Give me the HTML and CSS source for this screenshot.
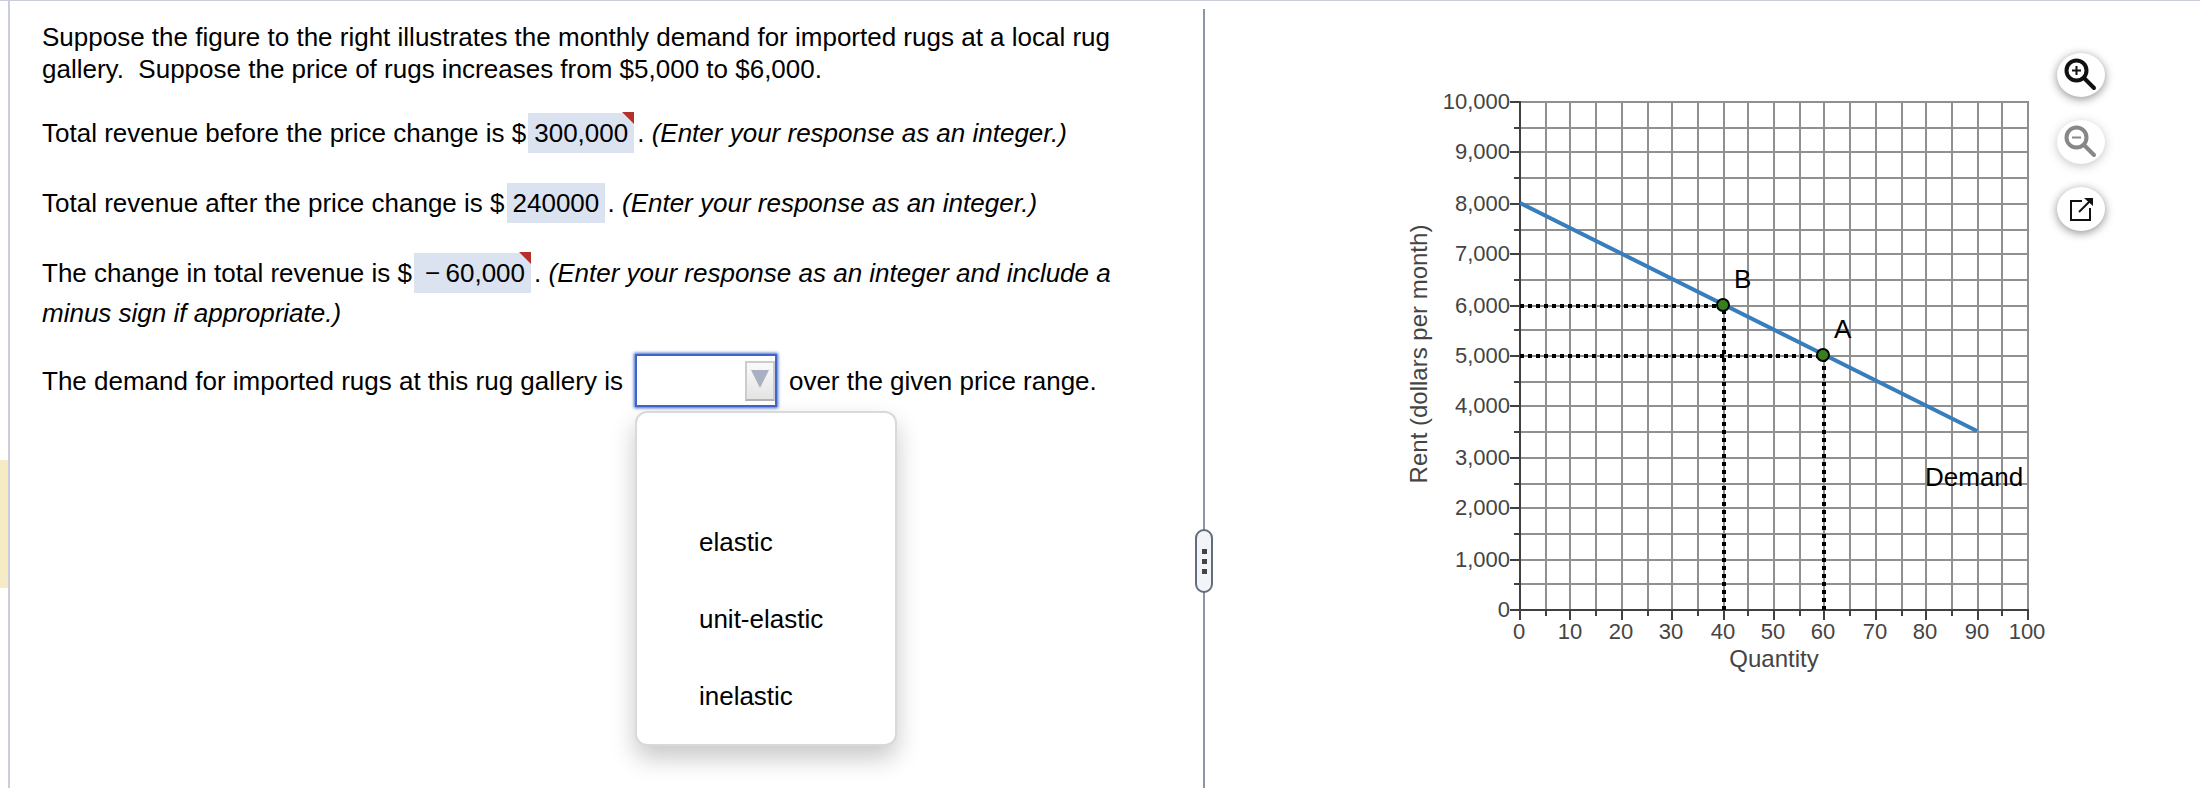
FILE: index.html
```html
<!DOCTYPE html>
<html lang="en">
<head>
    <meta charset="UTF-8">
    <meta name="viewport" content="width=device-width, initial-scale=1.0">
    <title>Demand for imported rugs</title>
    <link rel="stylesheet" href="styles.css">
</head>
<body>

    <div class="page">
        <aside class="gutter">
            <div class="marker"></div>
        </aside>

        <main class="question">
            <p class="intro">Suppose the figure to the right illustrates the monthly demand for imported rugs at a local rug gallery.&nbsp; Suppose the price of rugs increases from $5,000 to $6,000.</p>

            <p class="row">
                <label for="before">Total revenue before the price change is $</label><span class="answer flagged"><input type="text" id="before" class="answer-input w-before" value="300,000"></span>. <em>(Enter your response as an integer.)</em>
            </p>
            <p class="row">
                <label for="after">Total revenue after the price change is $</label><span class="answer"><input type="text" id="after" class="answer-input w-after" value="240000"></span>. <em>(Enter your response as an integer.)</em>
            </p>
            <p class="row">
                <label for="change">The change in total revenue is $</label><span class="answer flagged"><input type="text" id="change" class="answer-input w-change" value="−&#8201;60,000"></span>. <em>(Enter your response as an integer and include a minus sign if appropriate.)</em>
            </p>

            <div class="row select-row">
                <label for="elasticity">The demand for imported rugs at this rug gallery is</label>
                <div class="dropdown">
                    <select id="elasticity" class="dropdown-select">
                        <option value=""></option>
                        <option>elastic</option>
                        <option>unit-elastic</option>
                        <option>inelastic</option>
                    </select>
                    <span class="dropdown-arrow"></span>
                    <ul class="menu" role="listbox" aria-label="Elasticity">
                        <li class="menu-item" role="option"></li>
                        <li class="menu-item" role="option">elastic</li>
                        <li class="menu-item" role="option">unit-elastic</li>
                        <li class="menu-item" role="option">inelastic</li>
                    </ul>
                </div>
                <span>over the given price range.</span>
            </div>
        </main>

        <div class="divider">
            <button class="handle" aria-label="Resize panes">
                <span class="dot"></span>
                <span class="dot"></span>
                <span class="dot"></span>
            </button>
        </div>

        <section class="figure">
            <svg class="chart" width="644" height="590" viewBox="0 0 644 590">
                <g transform="translate(116 12)">
                    <!-- grid -->
                    <path class="grid" d="M26 0V508M50 0V508M76 0V508M102 0V508M128 0V508M152 0V508M178 0V508M204 0V508M228 0V508M254 0V508M280 0V508M304 0V508M330 0V508M356 0V508M382 0V508M406 0V508M432 0V508M458 0V508M482 0V508M508 -1V508"/>
                    <path class="grid" d="M0 0H508M0 26H508M0 50H508M0 76H508M0 102H508M0 128H508M0 152H508M0 178H508M0 204H508M0 228H508M0 254H508M0 280H508M0 304H508M0 330H508M0 356H508M0 382H508M0 406H508M0 432H508M0 458H508M0 482H508"/>

                    <!-- axes and ticks -->
                    <path class="axis" d="M0 -1V518M-10 508H509"/>
                    <path class="axis" d="M-10 0H0M-10 50H0M-10 102H0M-10 152H0M-10 204H0M-10 254H0M-10 304H0M-10 356H0M-10 406H0M-10 458H0"/>
                    <path class="axis" d="M-6 26H0M-6 76H0M-6 128H0M-6 178H0M-6 228H0M-6 280H0M-6 330H0M-6 382H0M-6 432H0M-6 482H0"/>
                    <path class="axis" d="M50 508V518M102 508V518M152 508V518M204 508V518M254 508V518M304 508V518M356 508V518M406 508V518M458 508V518M508 508V518"/>
                    <path class="axis" d="M26 508V514M76 508V514M128 508V514M178 508V514M228 508V514M280 508V514M330 508V514M382 508V514M432 508V514M482 508V514"/>

                    <g class="tick-label tick-y">
                        <text x="-10" y="7">10,000</text>
                        <text x="-10" y="57">9,000</text>
                        <text x="-10" y="109">8,000</text>
                        <text x="-10" y="159">7,000</text>
                        <text x="-10" y="211">6,000</text>
                        <text x="-10" y="261">5,000</text>
                        <text x="-10" y="311">4,000</text>
                        <text x="-10" y="363">3,000</text>
                        <text x="-10" y="413">2,000</text>
                        <text x="-10" y="465">1,000</text>
                        <text x="-10" y="515">0</text>
                    </g>
                    <g class="tick-label tick-x">
                        <text x="-1" y="537">0</text>
                        <text x="50" y="537">10</text>
                        <text x="101" y="537">20</text>
                        <text x="151" y="537">30</text>
                        <text x="203" y="537">40</text>
                        <text x="253" y="537">50</text>
                        <text x="303" y="537">60</text>
                        <text x="355" y="537">70</text>
                        <text x="405" y="537">80</text>
                        <text x="457" y="537">90</text>
                        <text x="507" y="537">100</text>
                    </g>
                    <text class="axis-title" x="254" y="565">Quantity</text>
                    <text class="axis-title" transform="translate(-93 252) rotate(-90)">Rent (dollars per month)</text>

                    <!-- demand curve -->
                    <path class="guide" d="M0 204H204M0 254H304M204 508V204M304 508V254"/>
                    <path class="demand" d="M0 101L457 329"/>
                    <circle class="point" cx="203" cy="203" r="6"/>
                    <circle class="point" cx="303" cy="253" r="6"/>
                    <text class="point-label" x="214" y="186">B</text>
                    <text class="point-label" x="314" y="236">A</text>
                    <text class="point-label" x="405" y="384">Demand</text>
                </g>
            </svg>

            <div class="tools">
                <button class="tool" aria-label="Zoom in">
                    <svg width="34" height="34" viewBox="0 0 34 34">
                        <circle cx="12.5" cy="12.5" r="10" fill="none" stroke="#111" stroke-width="4"/>
                        <path d="M12.5 8V17M8 12.5H17" stroke="#111" stroke-width="2"/>
                        <path d="M20 20L30 30" stroke="#111" stroke-width="4" stroke-linecap="round"/>
                    </svg>
                </button>
                <button class="tool faded" aria-label="Zoom out" disabled>
                    <svg width="34" height="34" viewBox="0 0 34 34">
                        <circle cx="12.5" cy="12.5" r="10" fill="none" stroke="#111" stroke-width="4"/>
                        <path d="M8 12.5H17" stroke="#111" stroke-width="2"/>
                        <path d="M20 20L30 30" stroke="#111" stroke-width="4" stroke-linecap="round"/>
                    </svg>
                </button>
                <button class="tool" aria-label="Open in new window">
                    <svg width="34" height="34" viewBox="0 0 34 34">
                        <path d="M18 9H7V28H26V16" fill="none" stroke="#111" stroke-width="2"/>
                        <path d="M15 20L26 9" stroke="#111" stroke-width="2"/>
                        <path d="M20 6H29V14Z" fill="#111"/>
                    </svg>
                </button>
            </div>
        </section>
    </div>

</body>
</html>
```
FILE: styles.css
```css
* {
    box-sizing: border-box;
}
body {
    font-family: "Liberation Sans", Arial, sans-serif;
    font-size: 26px;
    background-color: #fff;
    color: #000;
    margin: 0;
}
p {
    margin: 0;
}
.page {
    display: grid;
    grid-template-columns: 10px minmax(0, 6fr) 2px minmax(0, 5fr);
    min-height: 100vh;
    border-top: 1px solid #c9cddc;
}
.gutter {
    border-right: 2px solid #c9cddc;
    padding-top: 459px;
}
.marker {
    height: 128px;
    background-color: #f7ebc5;
}

/* question text */
.question {
    padding: 20px 80px 20px 32px;
}
.intro {
    line-height: 32px;
    margin-bottom: 28px;
}
.row {
    line-height: 40px;
    margin-bottom: 30px;
}
.answer {
    display: inline-block;
    position: relative;
    margin: 0 3px 0 2px;
}
.answer-input {
    display: block;
    height: 40px;
    padding: 0 6px;
    border: none;
    background-color: #dbe2f0;
    font: inherit;
    color: inherit;
    text-align: right;
}
.w-before {
    width: 106px;
}
.w-after {
    width: 98px;
}
.w-change {
    width: 117px;
}
.flagged::after {
    content: "";
    position: absolute;
    top: -1px;
    right: 0;
    border-top: 12px solid #b5302a;
    border-left: 12px solid transparent;
}

/* drop-down */
.select-row {
    display: flex;
    align-items: center;
    gap: 12px;
    margin-top: -9px;
}
.dropdown {
    position: relative;
}
.dropdown-select {
    display: block;
    appearance: none;
    width: 142px;
    height: 53px;
    border: 2px solid #4065c8;
    border-radius: 0;
    background-color: #fff;
    box-shadow: 0 0 3px 1px #4065c8;
    font: inherit;
}
.dropdown-arrow {
    position: absolute;
    top: 7px;
    right: 2px;
    width: 30px;
    height: 40px;
    border: 2px solid #ccc;
    border-bottom-color: #b3b3b3;
    background: linear-gradient(#fafafa, #e4e4e4);
    pointer-events: none;
}
.dropdown-arrow::after {
    content: "";
    position: absolute;
    top: 7px;
    left: 4px;
    border-top: 18px solid #a8b0c1;
    border-left: 9px solid transparent;
    border-right: 9px solid transparent;
}
.menu {
    position: absolute;
    top: 57px;
    left: 0;
    width: 262px;
    margin: 0;
    padding: 14px 0 9px;
    list-style: none;
    background-color: #fff;
    border: 2px solid #d9d9d9;
    border-radius: 12px;
    box-shadow: 0 12px 24px rgba(0, 0, 0, 0.22);
}
.menu-item {
    height: 77px;
    padding-left: 62px;
    line-height: 77px;
}

/* pane divider */
.divider {
    display: flex;
    justify-content: center;
    align-items: center;
    margin-top: 8px;
    padding-top: 325px;
    background-color: #8c94aa;
}
.handle {
    flex: none;
    display: flex;
    flex-direction: column;
    justify-content: center;
    align-items: center;
    gap: 5px;
    width: 18px;
    height: 64px;
    padding: 0;
    border: 2px solid #606d7d;
    border-radius: 9px;
    background-color: #f2f4f7;
}
.dot {
    width: 5px;
    height: 5px;
    background-color: #444;
}

/* figure */
.figure {
    display: flex;
    align-items: flex-start;
    padding-left: 20%;
}
.chart {
    flex: none;
    margin-top: 89px;
}
.grid {
    fill: none;
    stroke: #909090;
    stroke-width: 2;
}
.axis {
    fill: none;
    stroke: #404040;
    stroke-width: 2;
}
.tick-label {
    font-size: 22px;
    fill: #444;
}
.tick-y {
    text-anchor: end;
}
.tick-x {
    text-anchor: middle;
}
.axis-title {
    font-size: 24px;
    fill: #444;
    text-anchor: middle;
}
.guide {
    fill: none;
    stroke: #000;
    stroke-width: 4;
    stroke-dasharray: 4 4;
}
.demand {
    fill: none;
    stroke: #377ebd;
    stroke-width: 4;
}
.point {
    fill: #38801f;
    stroke: #000;
    stroke-width: 2;
}
.point-label {
    font-size: 26px;
    fill: #000;
}
.tools {
    display: flex;
    flex-direction: column;
    gap: 23px;
    margin-top: 52px;
    margin-left: 9px;
}
.tool {
    display: flex;
    justify-content: center;
    align-items: center;
    width: 48px;
    height: 44px;
    padding: 0;
    border: none;
    border-radius: 50%;
    background-color: #fff;
    box-shadow: 0 2px 10px rgba(0, 0, 0, 0.45);
}
.faded {
    opacity: 0.5;
}
```
